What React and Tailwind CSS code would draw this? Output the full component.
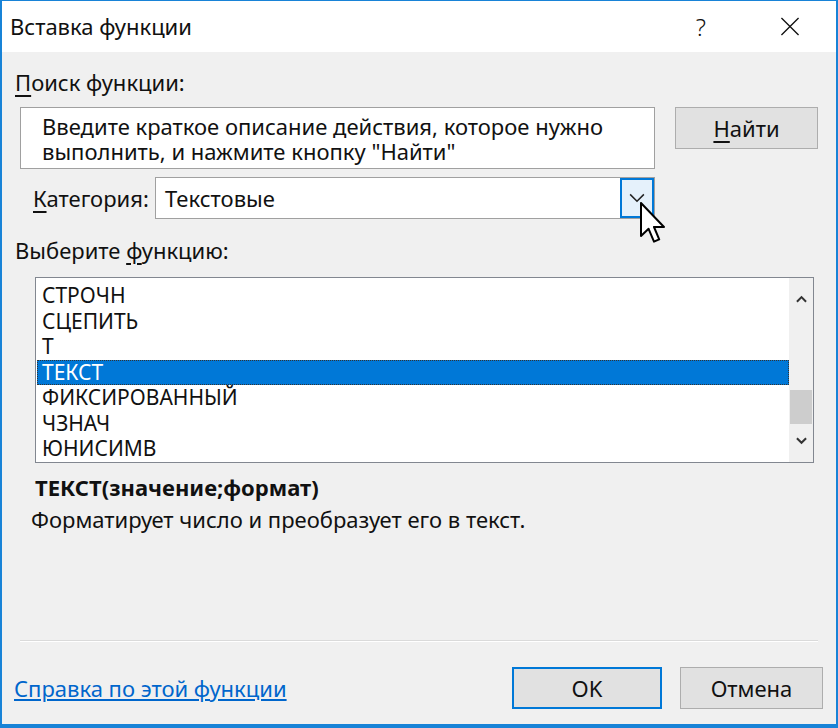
import React from "react";

const items = ["СТРОЧН", "СЦЕПИТЬ", "Т", "ТЕКСТ", "ФИКСИРОВАННЫЙ", "ЧЗНАЧ", "ЮНИСИМВ"];

const Chevron = ({ up, className, width = "1.6" }) => (
  <svg viewBox="0 0 12 8" className={className} fill="none" stroke="currentColor" strokeWidth={width}>
    {up ? <path d="M1 7 L6 2 L11 7" /> : <path d="M1 1 L6 6 L11 1" />}
  </svg>
);

const Cursor = () => (
  <svg viewBox="0 0 13 21" className="absolute left-[18px] top-[22px] h-[42px] w-[26px]">
    <path
      d="M0.5 0.5 L0.5 17 L4.3 13.4 L7 19.8 L9.6 18.7 L7 12.5 L12 12.5 Z"
      fill="#fff"
      stroke="#000"
      strokeWidth="1"
      strokeLinejoin="round"
    />
  </svg>
);

const Button = ({ children, primary, className = "" }) => (
  <button
    className={`flex h-[42px] items-center justify-center bg-[#e1e1e1] text-[22px] text-[#111] ${
      primary ? "border-2 border-[#0078d7]" : "border border-[#adadad]"
    } ${className}`}
  >
    {children}
  </button>
);

export default function App() {
  return (
    <div
      className="flex h-[728px] w-[838px] flex-col border-x-2 border-t border-b-4 border-[#1883d7] bg-[#f0f0f0] text-[#111]"
      style={{ fontFamily: '"Noto Sans", "Open Sans", sans-serif' }}
    >
      {/* title bar */}
      <div className="flex h-[51px] items-center bg-white pl-[8px] pr-[36px]">
        <span className="text-[22px]">Вставка функции</span>
        <span className="ml-auto mr-[74px] text-[24px] font-light">?</span>
        <svg viewBox="0 0 20 20" className="h-[19px] w-[20px]" stroke="#111" strokeWidth="1.4">
          <path d="M1 1 L19 19 M19 1 L1 19" />
        </svg>
      </div>

      <div className="flex flex-1 flex-col px-[13px]">
        <div className="mt-[18px] text-[22px] leading-[24px]">
          <span className="underline underline-offset-4">П</span>оиск функции:
        </div>

        <div className="mt-[13px] flex items-start gap-[20px]">
          <div className="ml-[5px] h-[62px] w-[635px] border border-[#a0a0a0] bg-white px-[21px] pt-[6px] text-[22px] leading-[25px]">
            Введите краткое описание действия, которое нужно выполнить, и нажмите кнопку "Найти"
          </div>
          <Button className="w-[143px]">
            <span className="underline underline-offset-4">Н</span>айти
          </Button>
        </div>

        <div className="mt-[8px] flex items-center">
          <span className="ml-[18px] w-[122px] text-[22px]">
            <span className="underline underline-offset-4">К</span>атегория:
          </span>
          <div className="flex h-[42px] w-[500px] items-center border border-[#a0a0a0] bg-white pl-[9px]">
            <span className="text-[22px]">Текстовые</span>
            <div className="relative ml-auto flex h-[40px] w-[34px] items-center justify-center border-2 border-[#0078d7] bg-[#e5f1fb]">
              <Chevron width="1.1" className="h-[11px] w-[18px] text-[#222]" />
              <Cursor />
            </div>
          </div>
        </div>

        <div className="mt-[19px] text-[22px] leading-[24px]">
          Выберите <span className="underline underline-offset-4">ф</span>ункцию:
        </div>

        <div className="ml-[20px] mt-[15px] flex h-[186px] w-[779px] border border-[#828790] bg-white">
          <div className="flex-1 pl-[1px] pt-[5px]">
            {items.map((it) => (
              <div
                key={it}
                className={`h-[25.5px] pl-[5px] text-[21px] leading-[25.5px] ${
                  it === "ТЕКСТ"
                    ? "bg-[#0078d7] text-white outline-1 -outline-offset-1 outline-dotted outline-[#333]"
                    : ""
                }`}
              >
                {it}
              </div>
            ))}
          </div>
          <div className="flex w-[24px] flex-col items-center bg-[#f0f0f0] py-[17px]">
            <Chevron up width="2.2" className="h-[8px] w-[11px] text-[#333]" />
            <div className="mt-[87px] h-[35px] w-[22px] bg-[#cdcdcd]" />
            <Chevron width="2.2" className="mt-[13px] h-[8px] w-[11px] text-[#333]" />
          </div>
        </div>

        <div className="ml-[20px] mt-[12px] text-[22px] font-bold leading-[24px]">
          ТЕКСТ(значение;формат)
        </div>
        <div className="ml-[16px] mt-[8px] text-[22px] leading-[24px]">
          Форматирует число и преобразует его в текст.
        </div>

        <div className="flex-1" />
        <div className="mx-[5px] border-t border-[#dadada] border-b border-b-white" />

        <div className="mb-[15px] mt-[25px] flex items-center">
          <a className="-ml-[1px] text-[22px] text-[#0066cc] underline underline-offset-2">
            Справка по этой функции
          </a>
          <Button primary className="ml-auto w-[150px]">
            OK
          </Button>
          <Button className="ml-[18px] w-[143px]">Отмена</Button>
        </div>
      </div>
    </div>
  );
}
